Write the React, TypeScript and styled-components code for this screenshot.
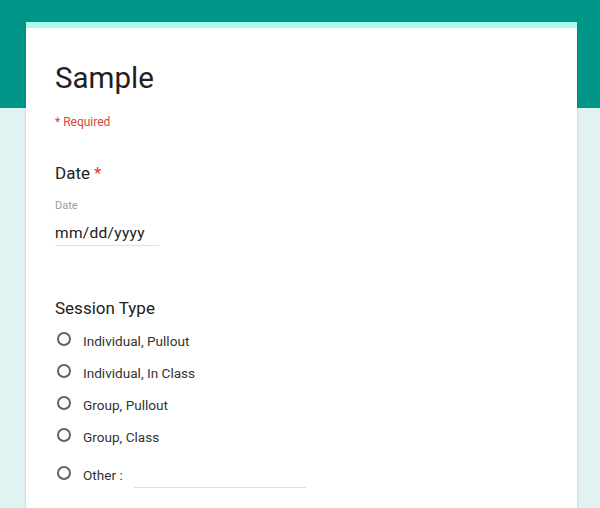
import React from 'react';
import styled, {createGlobalStyle} from 'styled-components';

const GlobalStyle = createGlobalStyle`
    html, body {
        margin: 0;
        padding: 0;
    }
    body {
        font-family: Roboto, "Noto Sans", Arial, sans-serif;
        background: #e0f2f1;
        overflow: hidden;
    }
`;

const Page = styled.div`
    height: 508px;
    overflow: hidden;
    background: linear-gradient(to bottom, #009688 0, #009688 108px, #e0f2f1 108px);
    padding: 22px 23px 0 26px;
    box-sizing: border-box;
`;

const Card = styled.div`
    background: #fff;
    border-top: 6px solid #a7ffeb;
    box-shadow: 0 1px 2px rgba(0, 0, 0, 0.2);
    padding: 30px 29px 40px 29px;
    min-height: 520px;
    box-sizing: border-box;
`;

const Title = styled.div`
    font-size: 29.5px;
    color: #212121;
    line-height: 40px;
`;

const Required = styled.div`
    margin-top: 16px;
    font-size: 12px;
    color: #db4437;
    line-height: 16px;
`;

const Question = styled.div<{top: number}>`
    margin-top: ${(p) => p.top}px;
    font-size: 17px;
    color: #212121;
    line-height: 24px;
`;

const Star = styled.span`
    color: #db4437;
    margin-left: 4px;
`;

const SmallLabel = styled.div`
    margin-top: 14px;
    font-size: 11px;
    color: #a09a9e;
    line-height: 14px;
`;

const DateInput = styled.div`
    margin-top: 10px;
    width: 104px;
    font-size: 15.5px;
    color: #212121;
    line-height: 20px;
    padding-bottom: 2px;
    border-bottom: 1px solid #e0e0e0;
    letter-spacing: 0.3px;
`;

const Options = styled.div`
    margin-top: 5px;
    display: flex;
    flex-direction: column;
`;

const Option = styled.div<{tall?: boolean}>`
    display: flex;
    align-items: center;
    height: ${(p) => (p.tall ? 40 : 32)}px;
    margin-top: ${(p) => (p.tall ? 2 : 0)}px;
`;

const Radio = styled.span`
    width: 10px;
    height: 10px;
    border: 2px solid #5f6368;
    border-radius: 50%;
    margin-left: 2px;
    margin-right: 12px;
    margin-top: -4px;
    flex: none;
`;

const OptionText = styled.span`
    font-size: 13.6px;
    color: #333;
`;

const OtherField = styled.span`
    width: 172px;
    margin-left: 11px;
    margin-top: 24px;
    border-bottom: 1px solid #e0e0e0;
`;

const options = ['Individual, Pullout', 'Individual, In Class', 'Group, Pullout', 'Group, Class'];

export default function App() {
    return (
        <>
            <GlobalStyle/>
            <Page>
                <Card>
                    <Title>Sample</Title>
                    <Required>* Required</Required>

                    <Question top={31}>Date<Star>*</Star></Question>
                    <SmallLabel>Date</SmallLabel>
                    <DateInput>mm/dd/yyyy</DateInput>

                    <Question top={50}>Session Type</Question>
                    <Options>
                        {options.map((o) => (
                            <Option key={o}>
                                <Radio/>
                                <OptionText>{o}</OptionText>
                            </Option>
                        ))}
                        <Option tall={true}>
                            <Radio/>
                            <OptionText>Other :</OptionText>
                            <OtherField/>
                        </Option>
                    </Options>
                </Card>
            </Page>
        </>
    );
}
